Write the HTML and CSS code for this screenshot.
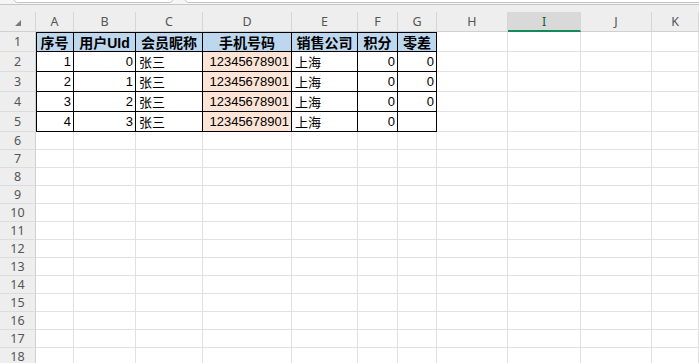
FILE: index.html
```html
<!DOCTYPE html>
<html lang="zh-CN">
<head>
    <meta charset="UTF-8">
    <meta name="viewport" content="width=device-width, initial-scale=1.0">
    <title>Sheet1</title>
    <link rel="stylesheet" href="styles.css">
</head>
<body>
    <div class="topbar">
        <div class="namebox"></div>
        <div class="formula"></div>
    </div>
    <div class="band"></div>
    <div class="sheet" id="sheet">
        <!-- column headers -->
        <div class="corner"><span class="tri"></span></div>
        <div class="ch">A</div>
        <div class="ch">B</div>
        <div class="ch">C</div>
        <div class="ch">D</div>
        <div class="ch">E</div>
        <div class="ch">F</div>
        <div class="ch">G</div>
        <div class="ch">H</div>
        <div class="ch sel">I</div>
        <div class="ch">J</div>
        <div class="ch">K</div>

        <!-- row 1 -->
        <div class="rh">1</div>
        <div class="c t hd first">序号</div>
        <div class="c t hd">用户UId</div>
        <div class="c t hd">会员昵称</div>
        <div class="c t hd">手机号码</div>
        <div class="c t hd">销售公司</div>
        <div class="c t hd">积分</div>
        <div class="c t hd">零差</div>
        <div class="c"></div>
        <div class="c"></div>
        <div class="c"></div>
        <div class="c"></div>

        <!-- row 2 -->
        <div class="rh">2</div>
        <div class="c t n left">1</div>
        <div class="c t n">0</div>
        <div class="c t">张三</div>
        <div class="c t n pink">12345678901</div>
        <div class="c t">上海</div>
        <div class="c t n">0</div>
        <div class="c t n">0</div>
        <div class="c"></div>
        <div class="c"></div>
        <div class="c"></div>
        <div class="c"></div>

        <!-- row 3 -->
        <div class="rh">3</div>
        <div class="c t n left">2</div>
        <div class="c t n">1</div>
        <div class="c t">张三</div>
        <div class="c t n pink">12345678901</div>
        <div class="c t">上海</div>
        <div class="c t n">0</div>
        <div class="c t n">0</div>
        <div class="c"></div>
        <div class="c"></div>
        <div class="c"></div>
        <div class="c"></div>

        <!-- row 4 -->
        <div class="rh">4</div>
        <div class="c t n left">3</div>
        <div class="c t n">2</div>
        <div class="c t">张三</div>
        <div class="c t n pink">12345678901</div>
        <div class="c t">上海</div>
        <div class="c t n">0</div>
        <div class="c t n">0</div>
        <div class="c"></div>
        <div class="c"></div>
        <div class="c"></div>
        <div class="c"></div>

        <!-- row 5 -->
        <div class="rh">5</div>
        <div class="c t n left">4</div>
        <div class="c t n">3</div>
        <div class="c t">张三</div>
        <div class="c t n pink">12345678901</div>
        <div class="c t">上海</div>
        <div class="c t n">0</div>
        <div class="c t"></div>
        <div class="c"></div>
        <div class="c"></div>
        <div class="c"></div>
        <div class="c"></div>
    </div>

    <script>
        // empty rows below the table
        let sheet = document.getElementById('sheet');
        for (let r = 6; r <= 18; r++) {
            let head = document.createElement('div');
            head.className = 'rh';
            head.textContent = r;
            sheet.appendChild(head);
            for (let i = 0; i < 11; i++) {
                let cell = document.createElement('div');
                cell.className = 'c';
                sheet.appendChild(cell);
            }
        }
    </script>
</body>
</html>
```

FILE: styles.css
```css
* {
    margin: 0;
    padding: 0;
    box-sizing: border-box;
}
body {
    background-color: #ffffff;
    font-family: "Liberation Sans", "Noto Sans CJK SC", sans-serif;
    overflow: hidden;
}
.topbar {
    display: flex;
    gap: 10px;
    height: 5px;
    padding-left: 13px;
    background-color: #f5f5f5;
    border-bottom: 1px solid #c6c6c6;
    overflow: hidden;
}
.namebox,
.formula {
    margin-top: -10px;
    height: 13px;
    background-color: #ffffff;
    border: 1px solid #c4c4c4;
    border-radius: 5px;
}
.namebox {
    width: 161px;
}
.formula {
    flex: 1;
    margin-right: -10px;
}
.band {
    height: 7px;
    background-color: #eeeeee;
}
.sheet {
    display: grid;
    grid-template-columns: 36px 38px 62px 67px 89px 66px 40px 39px 71px 73px 71px 1fr;
    grid-template-rows: repeat(6, 20px);
    grid-auto-rows: 18px;
}
.corner {
    position: relative;
    background-color: #eeeeee;
    border-right: 1px solid #d6d6d6;
    border-bottom: 1px solid #d0d0d0;
}
.tri {
    position: absolute;
    left: 15px;
    top: 8px;
    width: 0;
    height: 0;
    border-left: 6px solid transparent;
    border-bottom: 6px solid #7a7a7a;
}
.ch,
.rh {
    display: flex;
    align-items: center;
    justify-content: center;
    background-color: #eeeeee;
    color: #555555;
    font-family: "Noto Sans", "Liberation Sans", sans-serif;
    font-size: 12.5px;
}
.ch {
    border-right: 1px solid #d6d6d6;
    border-bottom: 1px solid #d0d0d0;
}
.ch.sel {
    background-color: #d9d9d9;
    color: #1d5e3a;
    border-bottom: 2px solid #138a5a;
}
.rh {
    border-right: 1px solid #d0d0d0;
    border-bottom: 1px solid #dcdcdc;
}
.c {
    display: flex;
    align-items: center;
    padding: 0 2px 0 3px;
    font-size: 13px;
    color: #000000;
    white-space: nowrap;
    overflow: hidden;
    background-color: #ffffff;
    border-right: 1px solid #e1e1e1;
    border-bottom: 1px solid #e1e1e1;
}
.c.t {
    border-right-color: #000000;
    border-bottom-color: #000000;
}
.c.hd {
    justify-content: center;
    padding: 0;
    font-size: 14px;
    font-weight: bold;
    background-color: #bdd7ee;
    box-shadow: inset 0 1px 0 #000000;
}
.c.hd.first {
    box-shadow: inset 1px 1px 0 #000000;
}
.c.left {
    box-shadow: inset 1px 0 0 #000000;
}
.c.n {
    justify-content: flex-end;
}
.c.pink {
    background-color: #fce4d6;
}
```
